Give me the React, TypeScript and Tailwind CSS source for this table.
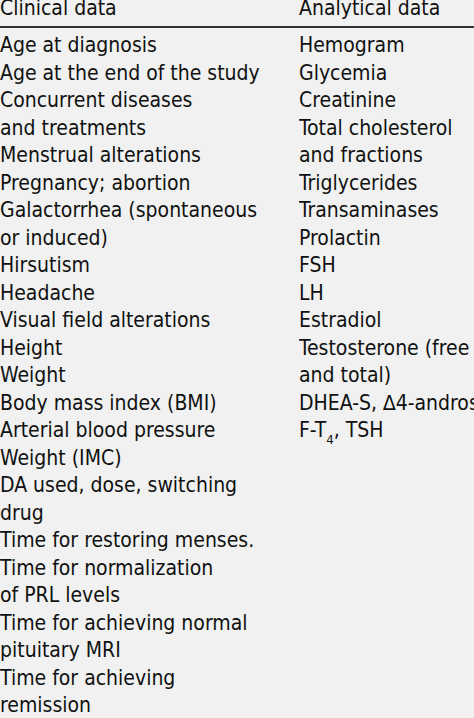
const CLINICAL = [
  "Age at diagnosis",
  "Age at the end of the study",
  "Concurrent diseases",
  "and treatments",
  "Menstrual alterations",
  "Pregnancy; abortion",
  "Galactorrhea (spontaneous",
  "or induced)",
  "Hirsutism",
  "Headache",
  "Visual field alterations",
  "Height",
  "Weight",
  "Body mass index (BMI)",
  "Arterial blood pressure",
  "Weight (IMC)",
  "DA used, dose, switching",
  "drug",
  "Time for restoring menses.",
  "Time for normalization",
  "of PRL levels",
  "Time for achieving normal",
  "pituitary MRI",
  "Time for achieving",
  "remission",
];

const ANALYTICAL: React.ReactNode[] = [
  "Hemogram",
  "Glycemia",
  "Creatinine",
  "Total cholesterol",
  "and fractions",
  "Triglycerides",
  "Transaminases",
  "Prolactin",
  "FSH",
  "LH",
  "Estradiol",
  "Testosterone (free",
  "and total)",
  <>DHEA-S, {"\u2206"}4-androstenedione</>,
  <>
    F-T<sub className="text-[13px] align-[-4px]">4</sub>, TSH
  </>,
];

export default function App() {
  return (
    <div className="w-[474px] h-[718px] overflow-hidden bg-[#f0f1f0] text-[#111111] font-['DejaVu_Sans_Condensed','DejaVu_Sans',sans-serif] text-[21px] leading-[27.5px]">
      {/* header */}
      <div className="flex h-[27.5px] border-b-[2.5px] border-[#333333]">
        <div className="w-[299px] shrink-0 -mt-[5px] whitespace-nowrap">Clinical data</div>
        <div className="flex-1 -mt-[5px] whitespace-nowrap">Analytical data</div>
      </div>

      {/* body */}
      <div className="flex pt-[4.5px]">
        <div className="w-[299px] shrink-0 flex flex-col">
          {CLINICAL.map((line, i) => (
            <div key={i} className="whitespace-nowrap">
              {line}
            </div>
          ))}
        </div>
        <div className="flex-1 flex flex-col overflow-hidden">
          {ANALYTICAL.map((line, i) => (
            <div key={i} className="whitespace-nowrap">
              {line}
            </div>
          ))}
        </div>
      </div>
    </div>
  );
}
